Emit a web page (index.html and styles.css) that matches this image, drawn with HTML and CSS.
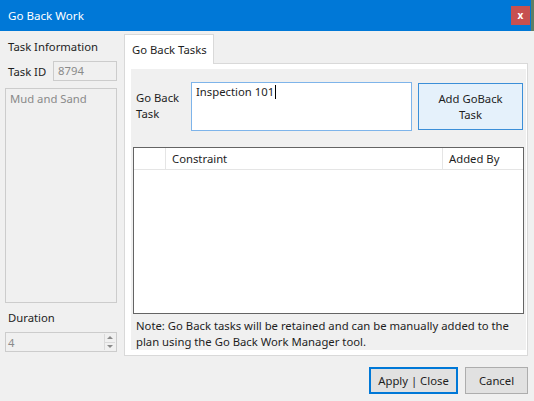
FILE: index.html
```html
<!DOCTYPE html>
<html lang="en">
<head>
    <meta charset="UTF-8">
    <title>Go Back Work</title>
    <link rel="stylesheet" href="styles.css">
</head>
<body>
    <div class="window">
        <div class="titlebar">
            <span class="title">Go Back Work</span>
            <span class="close">x</span>
            <span class="edge"></span>
        </div>

        <div class="main">
            <div class="task-info">
                <div class="label">Task Information</div>
                <div class="id-row">
                    <span class="id-label">Task ID</span>
                    <div class="field disabled id-field">8794</div>
                </div>
                <div class="field disabled desc">Mud and Sand</div>
                <div class="label dur-label">Duration</div>
                <div class="field disabled spinner">
                    <span>4</span>
                    <div class="spin-btns">
                        <span class="up"></span>
                        <span class="down"></span>
                    </div>
                </div>
            </div>

            <div class="tabs">
                <div class="tab">Go Back Tasks</div>
                <div class="tab-page">
                    <div class="tab-inner">
                        <div class="add-row">
                            <div class="gb-label">Go Back<br>Task</div>
                            <div class="gb-input">Inspection 101<span class="caret"></span></div>
                            <button class="btn add-btn">Add GoBack<br>Task</button>
                        </div>
                        <div class="grid">
                            <div class="grid-head">
                                <div class="col col-sel"></div>
                                <div class="col col-con">Constraint</div>
                                <div class="col col-by">Added By</div>
                            </div>
                        </div>
                        <p class="note">Note: Go Back tasks will be retained and can be manually added to the plan using the Go Back Work Manager tool.</p>
                    </div>
                </div>
            </div>
        </div>

        <div class="footer">
            <button class="btn apply">Apply | Close</button>
            <button class="btn cancel">Cancel</button>
        </div>
    </div>
</body>
</html>
```

FILE: styles.css
```css
* { box-sizing: border-box; }
body { margin: 0; background: #f0f0f0; font-family: "Noto Sans", "Open Sans", sans-serif; font-size: 11.3px; color: #1e1e1e; }
.window { width: 534px; height: 401px; background: #f0f0f0; }

.titlebar { height: 31px; background: #0078d7; color: #fff; display: flex; align-items: center; padding-left: 8px; font-size: 11.6px; }
.title { flex: 1; }
.close { width: 19px; height: 19px; background: #c75050; color: #fff; font-weight: bold; font-size: 10px; display: flex; align-items: center; justify-content: center; line-height: 1; padding-bottom: 2px; margin-right: 1px; }
.edge { align-self: stretch; width: 3px; background: #5f7f66; }

.main { display: flex; padding-left: 5px; }
.task-info { width: 112px; }
.label { line-height: 16px; padding-left: 3px; margin-top: 8px; }
.field { border: 1px solid #cccccc; background: #f0f0f0; }
.disabled { color: #8a8a8a; }
.id-row { display: flex; align-items: center; margin-top: 6px; height: 20px; }
.id-label { width: 48px; padding-left: 3px; }
.id-field { flex: 1; height: 20px; line-height: 18px; padding-left: 4px; }
.desc { height: 215px; margin-top: 7px; padding: 2px 4px; line-height: 16px; }
.dur-label { margin-top: 7px; }
.spinner { height: 20px; margin-top: 6px; display: flex; justify-content: space-between; align-items: center; padding-left: 2px; }
.spin-btns { width: 11px; height: 16px; margin-right: 1px; display: flex; flex-direction: column; border-left: 1px solid #dadada; }
.spin-btns span { flex: 1; display: flex; align-items: center; justify-content: center; }
.spin-btns span::before { content: ""; border-left: 3px solid transparent; border-right: 3px solid transparent; }
.up::before { border-bottom: 3px solid #8a8a8a; }
.down::before { border-top: 3px solid #8a8a8a; }
.down { border-top: 1px solid #dadada; }

.tabs { width: 404px; margin-left: 7px; margin-top: 3px; }
.tab { width: 90px; height: 30px; margin-bottom: -1px; position: relative; background: #fff; border: 1px solid #d9d9d9; border-bottom: none; padding: 7px 0 0 7px; }
.tab-page { height: 293px; background: #fff; border: 1px solid #d9d9d9; padding: 5px 1px 5px 6px; }
.tab-inner { height: 100%; background: #f0f0f0; padding-top: 13px; }

.add-row { display: flex; align-items: flex-start; }
.gb-label { width: 60px; padding-left: 5px; line-height: 16px; margin-top: 8px; }
.gb-input { width: 221px; height: 49px; background: #fff; border: 1px solid #7eb4ea; padding: 1px 4px; line-height: 16px; }
.caret { display: inline-block; width: 1px; height: 14px; background: #000; vertical-align: -3px; margin-left: 1px; }

.btn { font: inherit; color: #1e1e1e; background: #e1e1e1; border: 1px solid #adadad; padding: 0; line-height: 16px; }
.add-btn { width: 105px; height: 47px; margin: 1px 0 0 6px; background: #e5f1fb; border-color: #3c8fd8; }

.grid { height: 167px; margin: 16px 2px 0 2px; background: #fff; border: 1px solid #646464; }
.grid-head { display: flex; height: 22px; border-bottom: 1px solid #e5e5e5; }
.col { line-height: 21px; padding-left: 6px; }
.col-sel { width: 32px; border-right: 1px solid #e5e5e5; }
.col-con { flex: 1; border-right: 1px solid #e5e5e5; }
.col-by { width: 80px; }

.note { margin: 4px 0 0 5px; line-height: 16px; }

.footer { display: flex; justify-content: flex-end; gap: 7px; margin-top: 11px; padding-right: 6px; }
.apply { width: 89px; height: 27px; border: 2px solid #0078d7; }
.cancel { width: 63px; height: 27px; }
```
